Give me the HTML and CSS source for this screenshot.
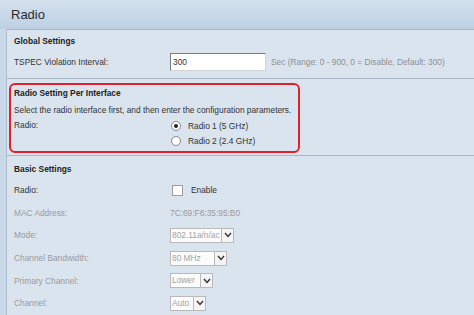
FILE: index.html
```html
<!DOCTYPE html>
<html lang="en">

<head>
    <meta charset="UTF-8">
    <meta name="viewport" content="width=device-width, initial-scale=1.0">
    <title>Radio</title>
    <link rel="stylesheet" href="styles.css">
</head>

<body>
    <div class="page-head">
        <h1 class="page-title">Radio</h1>
    </div>

    <div class="content">
        <!-- global -->
        <section class="group">
            <h2 class="group-title">Global Settings</h2>
            <div class="row">
                <span class="label">TSPEC Violation Interval:</span>
                <span class="value">
                    <input type="text" class="text-input" value="300">
                    <span class="hint">Sec (Range: 0 - 900, 0 = Disable, Default: 300)</span>
                </span>
            </div>
        </section>

        <!-- per interface -->
        <section class="group group-radio">
            <div class="highlight">
                <h2 class="group-title">Radio Setting Per Interface</h2>
                <p class="note">Select the radio interface first, and then enter the configuration parameters.</p>
                <div class="row-radio">
                    <span class="label">Radio:</span>
                    <div class="radio-list">
                        <label class="radio-opt"><span class="radio-dot checked"></span>Radio 1 (5 GHz)</label>
                        <label class="radio-opt"><span class="radio-dot"></span>Radio 2 (2.4 GHz)</label>
                    </div>
                </div>
            </div>
        </section>

        <!-- basic -->
        <section class="group group-basic">
            <h2 class="group-title">Basic Settings</h2>
            <div class="row">
                <span class="label">Radio:</span>
                <span class="value"><span class="check"></span>Enable</span>
            </div>
            <div class="row off">
                <span class="label">MAC Address:</span>
                <span class="value">7C:69:F6:35:95:B0</span>
            </div>
            <div class="row off">
                <span class="label">Mode:</span>
                <span class="value">
                    <span class="select w-mode"><span class="select-text">802.11a/n/ac</span><span class="select-btn"><svg width="8" height="6" viewBox="0 0 8 6"><polyline points="1,1 4,4.5 7,1" fill="none" stroke="#333" stroke-width="1.4"/></svg></span></span>
                </span>
            </div>
            <div class="row off">
                <span class="label">Channel Bandwidth:</span>
                <span class="value">
                    <span class="select w-bw"><span class="select-text">80 MHz</span><span class="select-btn"><svg width="8" height="6" viewBox="0 0 8 6"><polyline points="1,1 4,4.5 7,1" fill="none" stroke="#333" stroke-width="1.4"/></svg></span></span>
                </span>
            </div>
            <div class="row off">
                <span class="label">Primary Channel:</span>
                <span class="value">
                    <span class="select w-prim"><span class="select-text">Lower</span><span class="select-btn"><svg width="8" height="6" viewBox="0 0 8 6"><polyline points="1,1 4,4.5 7,1" fill="none" stroke="#333" stroke-width="1.4"/></svg></span></span>
                </span>
            </div>
            <div class="row off">
                <span class="label">Channel:</span>
                <span class="value">
                    <span class="select w-chan"><span class="select-text">Auto</span><span class="select-btn"><svg width="8" height="6" viewBox="0 0 8 6"><polyline points="1,1 4,4.5 7,1" fill="none" stroke="#333" stroke-width="1.4"/></svg></span></span>
                </span>
            </div>
        </section>
    </div>
</body>

</html>
```

FILE: styles.css
```css
* {
    padding: 0;
    margin: 0;
    box-sizing: border-box;
}

body {
    background: #c9d9e9;
    font-family: "Liberation Sans", Arial, sans-serif;
    font-size: 8.35px;
    color: #333;
    overflow: hidden;
}

/* title bar */
.page-head {
    height: 29px;
    padding-left: 11px;
    background: linear-gradient(#d4e1ed, #bdd0e3);
}

.page-title {
    font-size: 13px;
    font-weight: normal;
    line-height: 29px;
    color: #2b2b2b;
}

.content {
    margin-left: 6px;
    min-height: 300px;
    background: #dae4ef;
    border-left: 1px solid #aebccb;
    border-top: 1px solid #a9b6c4;
}

.group {
    padding: 6px 7px 5px 7px;
    border-bottom: 1px solid #a9b5c2;
}

.group-title {
    font-size: 8.35px;
    line-height: 11px;
    font-weight: bold;
    color: #222;
    margin-bottom: 4px;
}

.row {
    display: flex;
    align-items: center;
    height: 22px;
}

.label {
    width: 156px;
    flex-shrink: 0;
}

.value {
    display: flex;
    align-items: center;
}

.off {
    color: #9a9a9a;
}

.text-input {
    width: 96px;
    height: 18px;
    padding: 0 2px;
    font-family: inherit;
    font-size: 8.35px;
    color: #333;
    background: #fff;
    border: 1px solid;
    border-color: #7d7d7d #d4d4d4 #d4d4d4 #7d7d7d;
    outline: none;
}

.hint {
    margin-left: 5px;
    color: #8f8f8f;
}

/* red box section */
.group-radio {
    padding: 4px 0 2px 2px;
}

.highlight {
    width: 291px;
    padding: 3px 4px 3px 3px;
    border: 2px solid #e2202c;
    border-radius: 6px;
}

.highlight .group-title {
    margin-bottom: 6px;
}

.note {
    line-height: 11px;
    margin-bottom: 2px;
}

.row-radio {
    display: flex;
}

.row-radio .label {
    line-height: 15px;
}

.radio-list {
    display: flex;
    flex-direction: column;
}

.radio-opt {
    display: flex;
    align-items: center;
    height: 15px;
    padding-left: 1px;
}

.radio-dot {
    width: 10px;
    height: 10px;
    margin-right: 7px;
    border: 1px solid #8a8a8a;
    border-radius: 50%;
    background: #fff;
    display: flex;
    align-items: center;
    justify-content: center;
}

.radio-dot.checked::after {
    content: "";
    width: 4px;
    height: 4px;
    border-radius: 50%;
    background: #222;
}

/* basic */
.group-basic {
    padding-top: 8px;
    border-bottom: none;
}

.group-basic .group-title {
    margin-bottom: 4px;
}

.group-basic .row {
    height: 22.6px;
}

.check {
    width: 11px;
    height: 11px;
    margin: 0 8px 0 2px;
    background: #fff;
    border: 1px solid #9c9c9c;
}

.select {
    display: flex;
    height: 15px;
    background: #fcfcfc;
    border: 1px solid #b9b9b9;
}

.select-text {
    flex: 1;
    padding-left: 1px;
    line-height: 13px;
    color: #a3a3a3;
    white-space: nowrap;
    overflow: hidden;
}

.select-btn {
    width: 12px;
    display: flex;
    align-items: center;
    justify-content: center;
    background: #f4f4f4;
    border-left: 1px solid #b9b9b9;
}

.w-mode {
    width: 64px;
}

.w-bw {
    width: 57px;
}

.w-prim {
    width: 43px;
}

.w-chan {
    width: 36px;
}
```
